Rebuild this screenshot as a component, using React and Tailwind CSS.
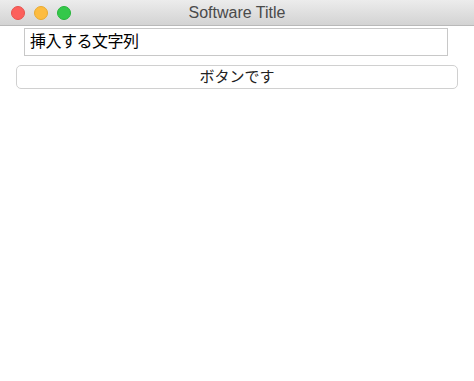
export default function App() {
  const font = { fontFamily: '"Helvetica Neue", "Liberation Sans", "Noto Sans CJK JP", sans-serif' };
  return (
    <div className="w-[474px] h-[381px] bg-white overflow-hidden" style={font}>
      <div className="relative h-[26px] bg-gradient-to-b from-[#ececec] to-[#d3d3d3] border-b border-[#b9b9b9] flex items-center justify-center">
        <div className="absolute left-[11px] top-[6px] flex gap-[9px]">
          <div className="w-[14px] h-[14px] rounded-full bg-[#fc605c] border border-[#e8524d]" />
          <div className="w-[14px] h-[14px] rounded-full bg-[#fdbc40] border border-[#e9aa2f]" />
          <div className="w-[14px] h-[14px] rounded-full bg-[#34c84a] border border-[#26b53a]" />
        </div>
        <span className="text-[16px] text-[#4a4a4a] leading-none">Software Title</span>
      </div>
      <div className="pl-[24px] pt-[2px]">
        <div className="w-[424px] h-[28px] border border-[#c8c8c8] bg-white flex items-center pl-[5px] text-[16px] tracking-[-0.5px] text-black">
          挿入する文字列
        </div>
      </div>
      <div className="pl-[16px] pt-[9px]">
        <div className="w-[442px] h-[24px] border border-[#d0d0d0] rounded-[5px] bg-white flex items-center justify-center text-[15px] text-[#222]">
          ボタンです
        </div>
      </div>
    </div>
  );
}
